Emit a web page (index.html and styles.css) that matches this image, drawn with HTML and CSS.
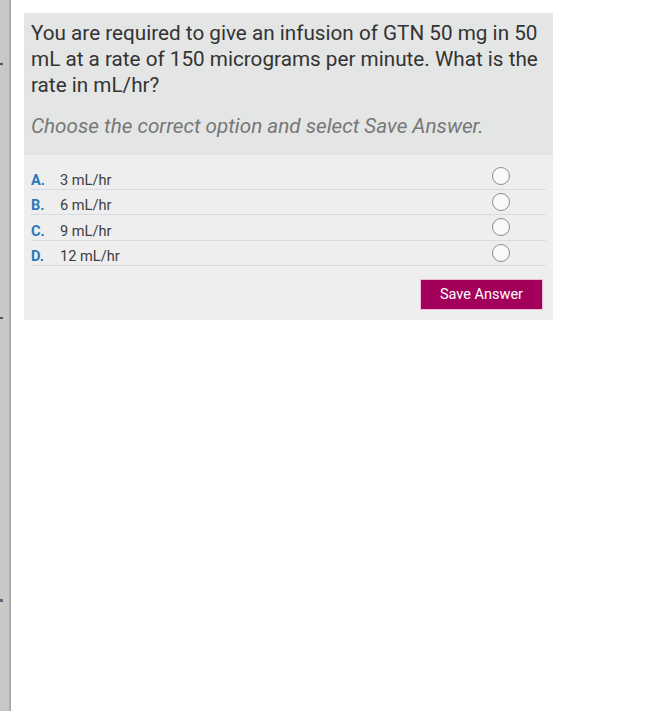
FILE: index.html
```html
<!DOCTYPE html>
<html lang="en">
<head>
<meta charset="utf-8">
<title>Question</title>
<link rel="stylesheet" href="styles.css">
</head>
<body>
<div class="page">
  <div class="rail">
    <span class="tick tick-1"></span>
    <span class="tick tick-2"></span>
    <span class="tick tick-3"></span>
  </div>
  <main class="main">
    <section class="card">
      <div class="qhead">
        <p class="question">You are required to give an infusion of GTN 50 mg in 50 mL at a rate of 150 micrograms per minute. What is the rate in mL/hr?</p>
        <p class="hint">Choose the correct option and select Save Answer.</p>
      </div>
      <div class="qbody">
        <ul class="options">
          <li class="option"><span class="key">A.</span><span class="text">3 mL/hr</span><span class="radio"></span></li>
          <li class="option"><span class="key">B.</span><span class="text">6 mL/hr</span><span class="radio"></span></li>
          <li class="option"><span class="key">C.</span><span class="text">9 mL/hr</span><span class="radio"></span></li>
          <li class="option"><span class="key">D.</span><span class="text">12 mL/hr</span><span class="radio"></span></li>
        </ul>
        <div class="actions"><button class="save" type="button">Save Answer</button></div>
      </div>
    </section>
  </main>
</div>
</body>
</html>
```
FILE: styles.css
```css
html, body {
  margin: 0;
  padding: 0;
  background: #ffffff;
}
body {
  font-family: Roboto, "Liberation Sans", Arial, sans-serif;
}
.page {
  display: flex;
  min-height: 711px;
}
.rail {
  position: relative;
  flex: none;
  width: 9px;
  background: #c8c8c8;
  border-right: 2px solid #ababab;
}
.tick {
  position: absolute;
  left: 0;
  width: 3px;
  height: 2px;
  background: #4a5561;
}
.tick-1 { top: 63px; }
.tick-2 { top: 317px; }
.tick-3 { top: 599px; height: 3px; background: #5a6c80; }
.main {
  flex: 1;
  padding: 13px 0 0 13px;
}
.card {
  width: 529px;
}
.qhead {
  background: #e4e5e5;
  padding: 7px 7px 16px 7px;
}
.question {
  margin: 0;
  font-size: 20.7px;
  line-height: 26px;
  color: #333333;
}
.hint {
  margin: 15px 0 0;
  font-size: 20.7px;
  line-height: 26px;
  font-style: italic;
  color: #777777;
}
.qbody {
  background: #eeeeee;
  padding: 9px 7px 11px 7px;
}
.options {
  list-style: none;
  margin: 0;
  padding: 0;
}
.option {
  display: flex;
  align-items: flex-end;
  height: 24.5px;
  border-bottom: 1px solid #d8dae4;
  font-size: 14.6px;
  line-height: 17px;
}
.key {
  width: 29px;
  color: #2a78bb;
  font-weight: 700;
}
.text {
  color: #3d3d3d;
}
.radio {
  align-self: center;
  margin-left: auto;
  margin-right: 36px;
  width: 16px;
  height: 16px;
  border: 1px solid #8c8c8c;
  border-radius: 50%;
  background: #fafafa;
}
.actions {
  display: flex;
  justify-content: flex-end;
  margin-top: 14px;
  padding-right: 4px;
}
.save {
  width: 121px;
  height: 29px;
  border: none;
  background: #a3005b;
  color: #ffffff;
  font-family: Roboto, "Liberation Sans", Arial, sans-serif;
  font-size: 14.5px;
  padding: 0;
  box-shadow: 0 0 0 1px #f2bcd8;
}
```
